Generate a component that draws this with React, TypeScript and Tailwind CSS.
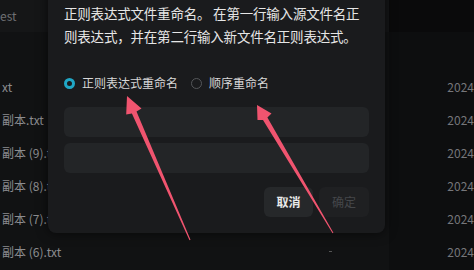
import React from "react";

const rows = ["xt", "副本.txt", "副本 (9).txt", "副本 (8).txt", "副本 (7).txt", "副本 (6).txt"];

export default function App() {
  return (
    <div
      className="relative w-[474px] h-[270px] overflow-hidden bg-[#0f1011] text-[12px]"
      style={{ fontFamily: '"Noto Sans CJK SC", "Noto Sans", sans-serif' }}
    >
      {/* background file list */}
      <div className="flex h-full">
        <div className="flex flex-col w-[390px] bg-[#111213]">
          <div className="h-[32px] bg-[#151617] flex items-center pl-[0px] text-[#6f7073]">est</div>
          <div className="flex flex-col pt-[38px]">
            {rows.map((r) => (
              <div key={r} className="h-[33px] flex items-center pl-[2px] text-[#8b8c8f] whitespace-nowrap">
                {r}
              </div>
            ))}
          </div>
        </div>
        <div className="flex flex-col flex-1 bg-[#0d0e0f]">
          <div className="h-[32px] bg-[#0a0a0b]" />
          <div className="flex flex-col pt-[38px]">
            {rows.map((r) => (
              <div key={r} className="h-[33px] flex items-center pl-[58px] text-[#75767a] whitespace-nowrap">
                2024
              </div>
            ))}
          </div>
        </div>
      </div>

      {/* dialog */}
      <div className="absolute left-[48px] top-[-20px] w-[337px] h-[253px] rounded-[8px] bg-[#1a1b1d] shadow-[0_0_12px_rgba(0,0,0,0.6)] flex flex-col pt-[22px] px-[16px] pb-[16px]">
        <div className="text-[13.5px] leading-[23px] text-[#e6e6e6] tracking-[-0.2px]">
          正则表达式文件重命名。 在第一行输入源文件名正则表达式，并在第二行输入新文件名正则表达式。
        </div>
        <div className="flex items-center h-[20px] mt-[25px] text-[12px] text-[#d8d8d8]">
          <span className="w-[11px] h-[11px] rounded-full border-[3px] border-[#20a7c6] ml-[0px] mr-[7px]" />
          <span>正则表达式重命名</span>
          <span className="w-[11px] h-[11px] rounded-full border border-[#55575a] ml-[13px] mr-[7px]" />
          <span>顺序重命名</span>
        </div>
        <div className="mt-[14px] h-[30px] rounded-[6px] bg-[#232527]" />
        <div className="mt-[6px] h-[30px] rounded-[6px] bg-[#232527]" />
        <div className="flex justify-end gap-[6px] mt-[14px]">
          <div className="w-[49px] h-[30px] rounded-[6px] bg-[#26282a] flex items-center justify-center text-[12px] font-bold text-[#e8e8e8]">
            取消
          </div>
          <div className="w-[50px] h-[30px] rounded-[6px] bg-[#1f2022] flex items-center justify-center text-[12px] text-[#45474a]">
            确定
          </div>
        </div>
      </div>

      {/* annotation arrows */}
      <svg className="absolute left-0 top-0" width="474" height="270" viewBox="0 0 474 270">
        <polygon
          fill="#f0546f"
          points="127,96 141.5,108.5 136.5,111.5 190.5,239.8 189.5,240.2 131.9,113.5 126.2,114.5"
        />
        <polygon
          fill="#f0546f"
          points="257,105 271.5,113.5 267.4,117.5 333.4,232.7 332.6,233.3 263,120.1 257.5,120"
        />
        <rect x="329" y="251" width="3" height="1" fill="#555" />
      </svg>
    </div>
  );
}
